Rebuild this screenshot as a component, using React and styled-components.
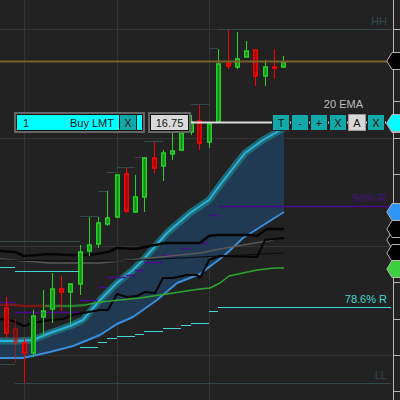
import React from 'react';
import styled, { createGlobalStyle } from 'styled-components';

const GlobalStyle = createGlobalStyle`
  html, body {
    margin: 0;
    padding: 0;
    background: #222222;
  }
  body {
    font-family: 'Liberation Sans', Arial, sans-serif;
  }
`;

const Page = styled.div`
  position: relative;
  display: flex;
  width: 400px;
  height: 400px;
  overflow: hidden;
  background: #222222;
`;

const ChartSvg = styled.svg`
  display: block;
  flex: 0 0 393px;
  width: 393px;
  height: 400px;

  polyline {
    fill: none;
    stroke-linejoin: round;
  }
`;

const PriceAxis = styled.div`
  flex: 1;
  display: flex;
  flex-direction: column;
  gap: 35.2px;
  padding-top: 29px;
  border-left: 1px solid #b4b4b4;
  box-sizing: border-box;
`;

const Tick = styled.div`
  flex: none;
  height: 1px;
  background: #b4b4b4;
`;

const OrderRow = styled.div`
  position: absolute;
  top: 112px;
  left: 14px;
  display: flex;
  align-items: center;
  font-size: 11px;
  color: #111;
`;

const QuantityBox = styled.div`
  display: flex;
  width: 131px;
  height: 21px;
  box-sizing: border-box;
  border: 2px solid #666666;
  margin-right: 3px;
`;

const QuantityInner = styled.div`
  flex: 1;
  display: flex;
  align-items: center;
  border: 1px solid #111;
  background: #00ffff;
  padding-left: 6px;
`;

const OrderLabel = styled.span`
  margin-left: auto;
  margin-right: 5px;
`;

const CancelButton = styled.div`
  align-self: stretch;
  width: 16px;
  margin-right: 5px;
  display: flex;
  align-items: center;
  justify-content: center;
  background: #11a9a9;
  border-left: 1px solid #111;
  border-right: 1px solid #111;
`;

const PriceBox = styled.div`
  width: 43px;
  height: 21px;
  box-sizing: border-box;
  border: 2px solid #666666;
  display: flex;
`;

const PriceInner = styled.div`
  flex: 1;
  display: flex;
  align-items: center;
  justify-content: center;
  border: 1px solid #111;
  background: #dadada;
`;

const ButtonRow = styled.div`
  position: absolute;
  top: 114px;
  left: 272px;
  display: flex;
  gap: 1px;
`;

const ActionButton = styled.div`
  width: 18px;
  height: 17px;
  box-sizing: border-box;
  display: flex;
  align-items: center;
  justify-content: center;
  font-size: 11px;
  color: #111;
  background: ${p => (p.$active ? '#d8d8d8' : '#11a9a9')};
  border: 1px solid ${p => (p.$active ? '#9a9a9a' : '#222222')};
`;

const Marker = styled.svg`
  position: absolute;
  left: 386px;
  top: ${p => p.$top}px;
  width: 14px;
  height: 18px;
`;

const candles = [
  [6.5, 297, 338, 308, 333, 'r'],
  [15.5, 319, 363, 329, 343, 'r', true],
  [24.5, 338, 383, 343, 353, 'r'],
  [33.5, 310, 357, 316, 353, 'g'],
  [43.5, 290, 337, 311, 317, 'g'],
  [52.5, 273, 323, 289, 309, 'g'],
  [61.5, 276, 311, 289, 292, 'r'],
  [70.5, 283, 325, 284, 292, 'g'],
  [80.5, 245, 295, 252, 284, 'g'],
  [89.5, 217, 256, 245, 251, 'g'],
  [98.5, 217, 248, 223, 244, 'g'],
  [107.5, 191, 226, 218, 224, 'g'],
  [117.5, 175, 218, 175, 217, 'g'],
  [126.5, 168, 213, 174, 211, 'r'],
  [135.5, 175, 213, 197, 212, 'g'],
  [144.5, 157, 212, 158, 197, 'g'],
  [154.5, 142, 173, 158, 168, 'r'],
  [163.5, 150, 181, 153, 166, 'g'],
  [172.5, 131, 160, 151, 154, 'g'],
  [181.5, 131, 151, 133, 150, 'g'],
  [191.5, 115, 135, 122, 132, 'g'],
  [199.5, 105, 150, 121, 143, 'r'],
  [209.5, 122, 148, 124, 142, 'g'],
  [218.5, 49, 122, 64, 122, 'g'],
  [228.5, 30, 69, 63, 66, 'r'],
  [237.5, 32, 69, 59, 67, 'g'],
  [246.5, 41, 50, 51, 57, 'g'],
  [255.5, 50, 86, 50, 76, 'r'],
  [265.5, 60, 86, 67, 76, 'g'],
  [274.5, 49, 79, 67, 68, 'r'],
  [283.5, 56, 68, 62, 67, 'g'],
];

const slateSteps = [
  [0, 15, 364.5], [15, 391, 383.5], [0, 80, 241.5], [80, 98, 216.5], [98, 107, 191.5],
  [107, 117, 172.5], [117, 135, 167.5], [135, 144, 157.5], [144, 163, 141.5],
  [191, 209, 104.5], [209, 218, 48.5], [218, 391, 29.5],
];

const cyanSteps = [
  [0, 15, 267.5], [15, 80, 271.5], [80, 98, 347.5], [98, 107, 342.5], [107, 117, 338.5],
  [117, 135, 336.5], [135, 144, 334.5], [144, 163, 331.5], [163, 181, 328.5],
  [181, 191, 325.5], [191, 209, 323.5], [209, 218, 311.5], [218, 391, 307.5],
];

const purpleSteps = [
  [0, 15, 302.5], [15, 80, 312.5], [80, 98, 300.5], [98, 107, 287.5], [107, 126, 277.5],
  [126, 135, 275.5], [135, 144, 270.5], [144, 163, 262.5], [163, 181, 255.5],
  [181, 191, 248.5], [191, 209, 243.5], [209, 218, 215.5], [218, 391, 206.5],
];

const emaTop = '0,341 17,341 33,340 50,333 70,326 83,320 100,300 117,283 133,270 143,260 167,233 190,213 209,200 220,185 245,153 263,140 284,128';
const emaBottom = '0,358 23,358 50,352 73,346 100,335 117,324 133,317 157,300 177,283 200,274 225,255 243,238 284,212';
const bandPoints = `${emaTop} 284,212 ${emaBottom.split(' ').reverse().join(' ')}`;

const Steps = ({ items, color, width = 1 }) => (
  <g stroke={color} strokeWidth={width}>
    {items.map(([x1, x2, y]) => (
      <line key={`${x1}-${y}`} x1={x1} x2={x2} y1={y} y2={y} />
    ))}
  </g>
);

const Candle = ({ x, top, bottom, open, close, red, dim }) => {
  const stroke = red ? '#ff0000' : '#2ad02a';
  return (
    <g opacity={dim ? 0.55 : 1}>
      <line x1={x} x2={x} y1={top} y2={bottom} stroke={stroke} strokeWidth="1" />
      <rect x={x - 1.75} y={open} width="3.5" height={close - open} fill={red ? '#8c0606' : '#128a12'} stroke={stroke} strokeWidth="1.5" />
    </g>
  );
};

const ChartLabel = ({ x, y, color, children }) => (
  <text x={x} y={y} fill={color} fontSize="11" textAnchor="end" fontFamily="'Liberation Sans', Arial, sans-serif">
    {children}
  </text>
);

const HexMarker = ({ top, fill }) => (
  <Marker $top={top} viewBox="0 0 14 18">
    <path d="M14 0.5H6L0.8 9L6 17.5H14" fill={fill} stroke="#b4b4b4" strokeWidth="1" />
  </Marker>
);

export default function App() {
  return (
    <>
      <GlobalStyle />
      <Page>
        <ChartSvg viewBox="0 0 393 400">
          <g stroke="#343434" strokeWidth="1">
            <line x1="24.5" x2="24.5" y1="0" y2="400" />
            <line x1="117.5" x2="117.5" y1="0" y2="400" />
            <line x1="209.5" x2="209.5" y1="0" y2="400" />
            <line x1="0" x2="393" y1="29.5" y2="29.5" />
            <line x1="0" x2="393" y1="138.5" y2="138.5" />
            <line x1="0" x2="393" y1="246.5" y2="246.5" />
            <line x1="0" x2="393" y1="355.5" y2="355.5" />
          </g>

          <polygon points={bandPoints} fill="#1f3a52" />
          <polyline points={emaTop} stroke="#1f6a72" strokeWidth="7" />
          <polyline points={emaTop} stroke="#2eb0e0" strokeWidth="2" />
          <polyline points={emaBottom} stroke="#3a8fdc" strokeWidth="2" />

          <Steps items={slateSteps} color="#34494c" />
          <Steps items={cyanSteps} color="#45d6cf" />
          <Steps items={purpleSteps} color="#4b0a8e" width={1.5} />

          <polyline points="0,259 50,263 100,263 150,258 200,253 220,249 243,245 273,240" stroke="#5a5a5a" strokeWidth="1.5" />
          <polyline points="0,260 70,261 120,261 200,257 284,253" stroke="#0c0c0c" strokeWidth="1" />
          <polyline points="0,251 15,252 24,256 50,254 70,255 90,255 108,252 117,248 135,249 150,246 165,243 180,243 200,243 209,236 218,235 250,235 257,236 267,229 284,229" stroke="#050505" strokeWidth="2.5" />
          <polyline points="0,319 13,321 24,326 33,323 50,320 63,319 72,315 83,313 100,310 108,310 117,294 127,297 137,296 145,292 155,293 163,278 173,278 187,275 197,275 200,278 209,260 220,256 257,257 265,240 284,238" stroke="#050505" strokeWidth="2" />
          <polyline points="0,305 15,305 25,306 45,306" stroke="#7a1717" strokeWidth="2.5" />
          <polyline points="45,306 73,306 85,305" stroke="#2b7a2b" strokeWidth="2.5" />
          <polyline points="85,305 100,302 140,298 200,289 210,288 220,283 229,276 257,270 275,268 284,268" stroke="#2fa82f" strokeWidth="1.5" />

          {candles.map(([x, top, bottom, open, close, side, dim]) => (
            <Candle key={x} x={x} top={top} bottom={bottom} open={open} close={close} red={side === 'r'} dim={dim} />
          ))}

          <line x1="0" x2="393" y1="61.5" y2="61.5" stroke="#7a6128" strokeWidth="2" />
          <line x1="190" x2="386" y1="122.5" y2="122.5" stroke="#dcdcdc" strokeWidth="2" />

          <ChartLabel x="387" y="25" color="#34494c">HH</ChartLabel>
          <ChartLabel x="363" y="108" color="#bdbdbd">20 EMA</ChartLabel>
          <ChartLabel x="386" y="202" color="#4b0a8e">50% R</ChartLabel>
          <ChartLabel x="387" y="303" color="#45d6cf">78.6% R</ChartLabel>
          <ChartLabel x="387" y="379" color="#34494c">LL</ChartLabel>
        </ChartSvg>

        <PriceAxis>
          {Array.from({ length: 11 }, (_, i) => <Tick key={i} />)}
        </PriceAxis>

        <OrderRow>
          <QuantityBox>
            <QuantityInner>
              1
              <OrderLabel>Buy LMT</OrderLabel>
              <CancelButton>X</CancelButton>
            </QuantityInner>
          </QuantityBox>
          <PriceBox>
            <PriceInner>16.75</PriceInner>
          </PriceBox>
        </OrderRow>

        <ButtonRow>
          <ActionButton>T</ActionButton>
          <ActionButton>-</ActionButton>
          <ActionButton>+</ActionButton>
          <ActionButton>X</ActionButton>
          <ActionButton $active>A</ActionButton>
          <ActionButton>X</ActionButton>
        </ButtonRow>

        <HexMarker top={52} fill="#000000" />
        <HexMarker top={115} fill="#2f96f3" />
        <HexMarker top={114} fill="#00ffff" />
        <HexMarker top={203} fill="#2f96f3" />
        <HexMarker top={231} fill="#000000" />
        <HexMarker top={220} fill="#000000" />
        <HexMarker top={244} fill="#000000" />
        <HexMarker top={260} fill="#3dcf3d" />
      </Page>
    </>
  );
}
